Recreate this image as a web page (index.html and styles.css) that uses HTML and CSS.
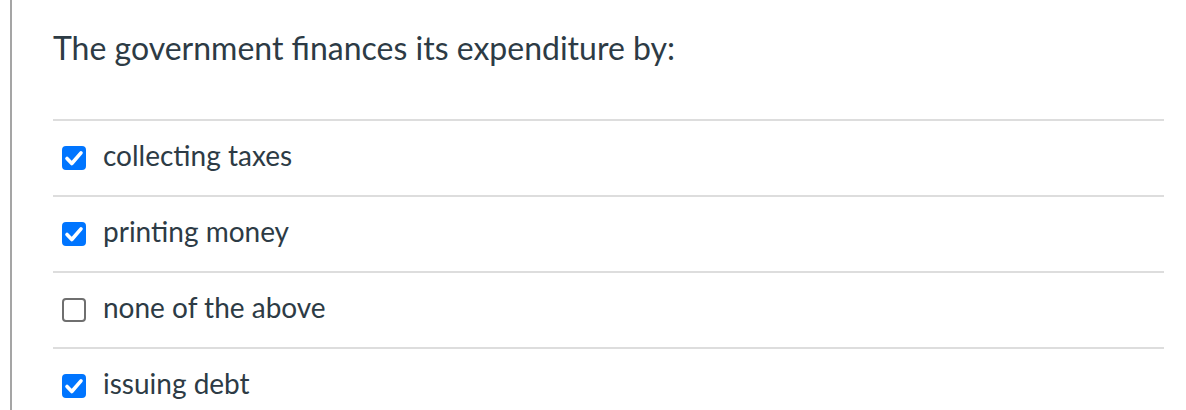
FILE: index.html
```html
<!DOCTYPE html>
<html>
<head>
<meta charset="utf-8">
<link rel="stylesheet" href="styles.css">
</head>
<body>
<div class="page">
  <div class="question">The government finances its expenditure by:</div>
  <div class="answers">
    <div class="answer">
      <span class="box checked"><svg viewBox="0 0 24 24" width="24" height="24"><path d="M5 12.5 L9.8 17.5 L19 6.8" fill="none" stroke="#fff" stroke-width="3.6" stroke-linecap="round" stroke-linejoin="round"/></svg></span>
      <span class="label">collecting taxes</span>
    </div>
    <div class="answer">
      <span class="box checked"><svg viewBox="0 0 24 24" width="24" height="24"><path d="M5 12.5 L9.8 17.5 L19 6.8" fill="none" stroke="#fff" stroke-width="3.6" stroke-linecap="round" stroke-linejoin="round"/></svg></span>
      <span class="label">printing money</span>
    </div>
    <div class="answer">
      <span class="box"></span>
      <span class="label">none of the above</span>
    </div>
    <div class="answer">
      <span class="box checked"><svg viewBox="0 0 24 24" width="24" height="24"><path d="M5 12.5 L9.8 17.5 L19 6.8" fill="none" stroke="#fff" stroke-width="3.6" stroke-linecap="round" stroke-linejoin="round"/></svg></span>
      <span class="label">issuing debt</span>
    </div>
  </div>
</div>
</body>
</html>
```
FILE: styles.css
```css
html, body {
  margin: 0;
  padding: 0;
  background: #fff;
}
body {
  font-family: Lato, "Liberation Sans", sans-serif;
  color: #2d3b45;
  overflow: hidden;
}
.page {
  margin-left: 10px;
  border-left: 2px solid #a5a5a5;
  padding: 0 22px 0 41px;
  min-height: 410px;
  box-sizing: border-box;
}
.question {
  font-size: 32px;
  line-height: 38px;
  padding-top: 29px;
  height: 119px;
  box-sizing: border-box;
}
.answer {
  border-top: 2px solid #dddddd;
  height: 76px;
  box-sizing: border-box;
  display: flex;
  align-items: center;
  padding-left: 9px;
  gap: 17px;
}
.box {
  width: 24px;
  height: 24px;
  box-sizing: border-box;
  border: 2px solid #6f6f6f;
  border-radius: 4px;
  flex: none;
  display: flex;
  align-items: center;
  justify-content: center;
}
.box.checked {
  background: #0075ff;
  border-color: #0075ff;
}
.box svg {
  display: block;
  flex: none;
}
.label {
  font-size: 28px;
  line-height: 34px;
  padding-bottom: 6px;
}
```
